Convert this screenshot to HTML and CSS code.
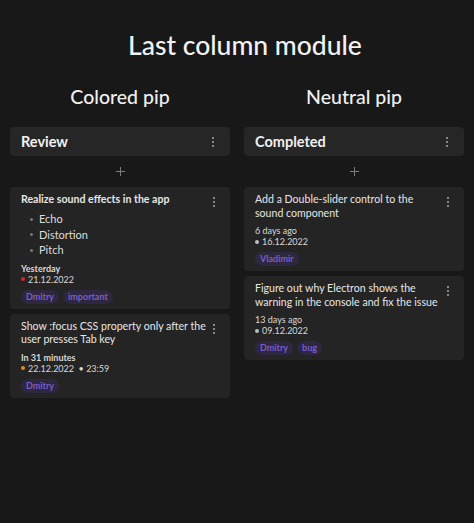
FILE: index.html
```html
<!DOCTYPE html>
<html>
<head>
<meta charset="utf-8">
<link rel="stylesheet" href="styles.css">
</head>
<body>
<h1 class="title">Last column module</h1>
<div class="board">
  <section class="col">
    <h2 class="col-title">Colored pip</h2>
    <div class="col-head"><span class="col-name">Review</span><span class="kebab"><i></i><i></i><i></i></span></div>
    <div class="add"><span class="plus"></span></div>
    <div class="card">
      <div class="card-top"><span class="card-title bold">Realize sound effects in the app</span><span class="kebab"><i></i><i></i><i></i></span></div>
      <ul class="list">
        <li>Echo</li>
        <li>Distortion</li>
        <li>Pitch</li>
      </ul>
      <div class="meta">Yesterday</div>
      <div class="date"><span class="pip red"></span>21.12.2022</div>
      <div class="tags"><span class="tag">Dmitry</span><span class="tag">important</span></div>
    </div>
    <div class="card">
      <div class="card-top"><span class="card-title">Show :focus CSS property only after the user presses Tab key</span><span class="kebab"><i></i><i></i><i></i></span></div>
      <div class="meta">In 31 minutes</div>
      <div class="date"><span class="pip orange"></span>22.12.2022 &nbsp;•&nbsp;23:59</div>
      <div class="tags"><span class="tag">Dmitry</span></div>
    </div>
  </section>
  <section class="col">
    <h2 class="col-title">Neutral pip</h2>
    <div class="col-head"><span class="col-name">Completed</span><span class="kebab"><i></i><i></i><i></i></span></div>
    <div class="add"><span class="plus"></span></div>
    <div class="card">
      <div class="card-top"><span class="card-title">Add a Double-slider control to the sound component</span><span class="kebab"><i></i><i></i><i></i></span></div>
      <div class="meta light">6 days ago</div>
      <div class="date"><span class="pip gray"></span>16.12.2022</div>
      <div class="tags"><span class="tag">Vladimir</span></div>
    </div>
    <div class="card">
      <div class="card-top"><span class="card-title">Figure out why Electron shows the warning in the console and fix the issue</span><span class="kebab"><i></i><i></i><i></i></span></div>
      <div class="meta light">13 days ago</div>
      <div class="date"><span class="pip gray"></span>09.12.2022</div>
      <div class="tags"><span class="tag">Dmitry</span><span class="tag">bug</span></div>
    </div>
  </section>
</div>
</body>
</html>
```
FILE: styles.css
```css
html, body {
  margin: 0;
  padding: 0;
  background: #181818;
  color: #e8e8e8;
  font-family: "Lato", "Noto Sans", sans-serif;
}
body {
  width: 474px;
  height: 523px;
  overflow: hidden;
}
.title {
  margin: 0;
  padding: 29px 0 0 16px;
  text-align: center;
  font-size: 26.5px;
  font-weight: 500;
  line-height: 32px;
  color: #f2f2f2;
}
.board {
  display: grid;
  grid-template-columns: 220px 220px;
  column-gap: 14px;
  padding: 0 10px;
  margin-top: 24px;
}
.col-title {
  margin: 0 0 18px;
  text-align: center;
  font-size: 19.5px;
  font-weight: 500;
  line-height: 24px;
  color: #f0f0f0;
}
.col-head {
  display: flex;
  align-items: center;
  justify-content: space-between;
  height: 29px;
  padding: 0 16px 0 11px;
  background: #262626;
  border-radius: 4px;
}
.col-name {
  font-size: 14.5px;
  font-weight: 700;
  color: #f0f0f0;
}
.kebab {
  display: flex;
  flex-direction: column;
  gap: 2px;
  flex: none;
}
.kebab i {
  display: block;
  width: 2px;
  height: 2px;
  border-radius: 1px;
  background: #a8a8a8;
}
.add {
  display: flex;
  justify-content: center;
  align-items: center;
  height: 31px;
}
.plus {
  position: relative;
  width: 9px;
  height: 9px;
}
.plus::before,
.plus::after {
  content: "";
  position: absolute;
  background: #7c7c7c;
}
.plus::before {
  left: 0;
  top: 4px;
  width: 9px;
  height: 1px;
}
.plus::after {
  left: 4px;
  top: 0;
  width: 1px;
  height: 9px;
}
.card {
  background: #242424;
  border-radius: 4px;
  padding: 6px 11px 5px;
  margin-bottom: 5px;
}
.card-top {
  display: flex;
  justify-content: space-between;
  align-items: flex-start;
  gap: 6px;
}
.card-top .kebab {
  margin-top: 4px;
  margin-right: 4px;
}
.card-title {
  font-size: 10.6px;
  line-height: 13.5px;
  color: #e6e6e6;
}
.card-title.bold {
  font-weight: 700;
}
.list {
  margin: 4px 0 5px;
  padding: 0 0 0 9px;
  list-style: none;
}
.list li {
  position: relative;
  padding-left: 9px;
  font-size: 11px;
  line-height: 15.5px;
  color: #dcdcdc;
}
.list li::before {
  content: "";
  position: absolute;
  left: 0;
  top: 6.5px;
  width: 3px;
  height: 3px;
  border-radius: 50%;
  background: #777;
}
.card-top + .meta {
  margin-top: 5px;
}
.meta {
  font-size: 9px;
  line-height: 11px;
  font-weight: 700;
  color: #d8d8d8;
}
.meta.light {
  font-weight: 400;
}
.date {
  display: flex;
  align-items: center;
  font-size: 9px;
  line-height: 11px;
  color: #d8d8d8;
  white-space: pre;
}
.pip {
  width: 4px;
  height: 4px;
  border-radius: 50%;
  margin-right: 3px;
}
.pip.red { background: #e0202c; }
.pip.orange { background: #e88a1a; }
.pip.gray { background: #bdbdbd; }
.tags {
  display: flex;
  gap: 4px;
  margin-top: 5px;
}
.tag {
  font-size: 9px;
  line-height: 14px;
  font-weight: 700;
  color: #7a5cc8;
  background: #2d2740;
  border-radius: 7px;
  padding: 0 5px;
}
```
